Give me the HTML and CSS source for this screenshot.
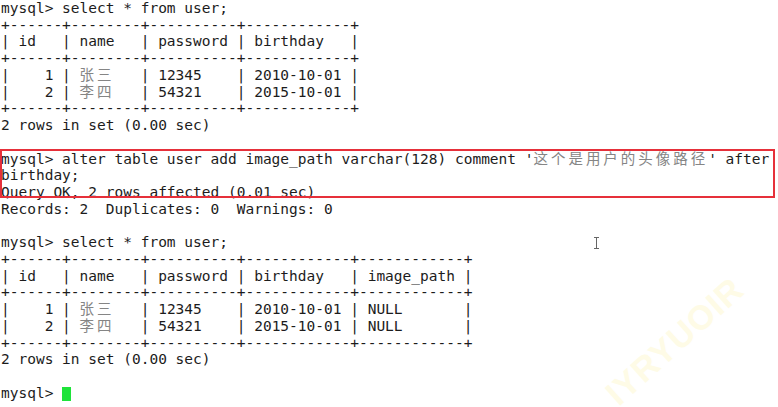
FILE: index.html
```html
<!DOCTYPE html>
<html>
<head>
<meta charset="utf-8">
<link rel="stylesheet" href="styles.css">
</head>
<body>
<div class="term">
<pre class="out">mysql&gt; select * from user;
+------+--------+----------+------------+
| id   | name   | password | birthday   |
+------+--------+----------+------------+
|    1 | <span class="cjk">张三</span>   | 12345    | 2010-10-01 |
|    2 | <span class="cjk">李四</span>   | 54321    | 2015-10-01 |
+------+--------+----------+------------+
2 rows in set (0.00 sec)

mysql&gt; alter table user add image_path varchar(128) comment '<span class="cjk">这个是用户的头像路径</span>' after
birthday;
Query OK, 2 rows affected (0.01 sec)
Records: 2  Duplicates: 0  Warnings: 0

mysql&gt; select * from user;
+------+--------+----------+------------+------------+
| id   | name   | password | birthday   | image_path |
+------+--------+----------+------------+------------+
|    1 | <span class="cjk">张三</span>   | 12345    | 2010-10-01 | NULL       |
|    2 | <span class="cjk">李四</span>   | 54321    | 2015-10-01 | NULL       |
+------+--------+----------+------------+------------+
2 rows in set (0.00 sec)

mysql&gt; <span class="cursor"></span></pre>
<div class="highlight"></div>
<svg class="ibeam" width="7" height="12" viewBox="0 0 7 12"><path d="M1 0.5h5M1 11.5h5M3.5 0.5v11" stroke="#666" stroke-width="1" fill="none"/></svg>
<div class="watermark">IYRYUOIR</div>
</div>
</body>
</html>
```

FILE: styles.css
```css
html, body {
  margin: 0;
  padding: 0;
  background: #ffffff;
}

.term {
  position: relative;
  width: 778px;
  height: 407px;
  overflow: hidden;
}

.out {
  margin: 0;
  padding: 0 0 0 1px;
  font-family: "DejaVu Sans Mono", monospace;
  font-size: 14.5px;
  line-height: 16.74px;
  color: #1c1c1c;
  white-space: pre;
}

.cjk {
  font-family: "Noto Sans CJK SC", sans-serif;
  font-size: 14.5px;
  letter-spacing: 2.96px;
  line-height: 0;
  color: #858585;
}

.cursor {
  display: inline-block;
  width: 9px;
  height: 14px;
  background: #1ee33a;
  vertical-align: -3px;
}

.highlight {
  position: absolute;
  left: 0;
  top: 149px;
  width: 771px;
  height: 45px;
  border: 2px solid #e6303a;
}

.ibeam {
  position: absolute;
  left: 593px;
  top: 237px;
}

.watermark {
  position: absolute;
  left: 598px;
  top: 384px;
  font-family: "Liberation Sans", sans-serif;
  font-weight: bold;
  font-size: 34px;
  letter-spacing: 1px;
  color: #fefbe6;
  transform: rotate(-42deg);
  transform-origin: left top;
  white-space: nowrap;
}
```
